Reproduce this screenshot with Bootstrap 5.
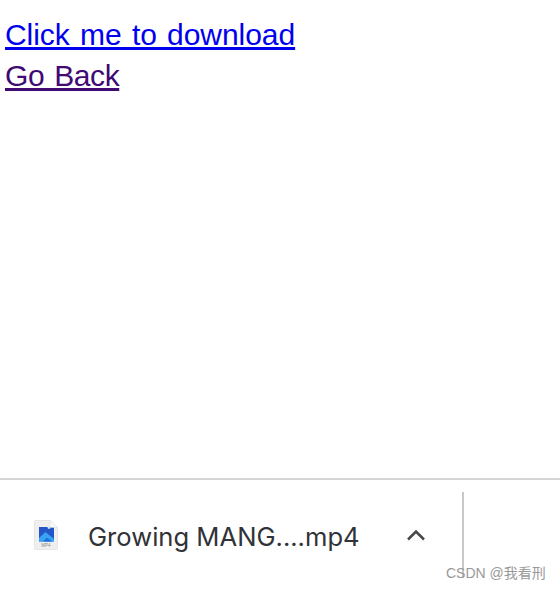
<!DOCTYPE html>
<html lang="en">
<head>
<meta charset="utf-8">
<title>Download</title>
<link rel="stylesheet" href="https://cdn.jsdelivr.net/npm/bootstrap@5.3.0/dist/css/bootstrap.min.css">
<style>
html,body{height:590px;overflow:hidden;background:#fff}
body{font-family:"Liberation Sans",Arial,sans-serif}
.page-frame{height:590px;position:relative}
.link-stack{padding:14px 0 0 5px;font-size:30px;line-height:41px}
.link-stack a{display:block;width:max-content;word-spacing:2px}
.link-new{color:#0000ee;letter-spacing:-.05px}
.link-seen{color:#3f0a73;letter-spacing:-.4px}
.shelf{height:112px;border-top:2px solid #d6d6d6}
.shelf-item{width:464px;height:86px;margin-top:12px;border-right:2px solid #c8c8c8;padding-left:34px}
.file-name{font-family:Inter,"Liberation Sans",sans-serif;font-size:25.6px;color:#303338;margin:3px 0 0 30px;width:318px;line-height:30px}
.file-label{font-family:"Liberation Sans",sans-serif;font-size:4.500px;fill:#85888c}
.water-mark{position:absolute;left:446px;top:564px;font-size:14px;line-height:18px;color:#999;font-family:"Liberation Sans","Noto Sans CJK SC",sans-serif}
</style>
</head>
<body>
<div class="page-frame d-flex flex-column">
  <div class="link-stack flex-grow-1">
    <a class="link-new" href="#download">Click me to download</a>
    <a class="link-seen" href="#back">Go Back</a>
  </div>
  <div class="shelf">
    <div class="shelf-item d-flex align-items-center">
      <svg width="24" height="30" viewBox="0 0 24 30" aria-hidden="true">
        <path d="M1.500 .5h14.500l7.500 7.500v20.500a1 1 0 0 1-1 1H1.500a1 1 0 0 1-1-1V1.500a1 1 0 0 1 1-1z" fill="#efeff0" stroke="#dedede" stroke-width=".7"/>
        <rect x="5" y="7" width="15" height="14.500" fill="#2456c8"/>
        <path d="M5 18l6.500-6 8.500 7v2.500H5z" fill="#38a4f2"/>
        <path d="M9 21.500l4-4 5 4z" fill="#1e6fd9"/>
        <path d="M16 .5v6a1 1 0 0 0 1 1h6.500z" fill="#fafafa" stroke="#d8d8d8" stroke-width=".5"/>
        <circle cx="15" cy="7.500" r="1.400" fill="#d5e8fb"/>
        <text class="file-label" x="12" y="27" text-anchor="middle">MP4</text>
      </svg>
      <span class="file-name">Growing MANG....mp4</span>
      <svg width="20" height="14" viewBox="0 0 20 14" aria-hidden="true"><path d="M2 11.500l8-8 8 8" fill="none" stroke="#45484c" stroke-width="2.600"/></svg>
    </div>
  </div>
  <span class="water-mark">CSDN @我看刑</span>
</div>
<script src="https://cdn.jsdelivr.net/npm/bootstrap@5.3.0/dist/js/bootstrap.bundle.min.js"></script>
</body>
</html>
